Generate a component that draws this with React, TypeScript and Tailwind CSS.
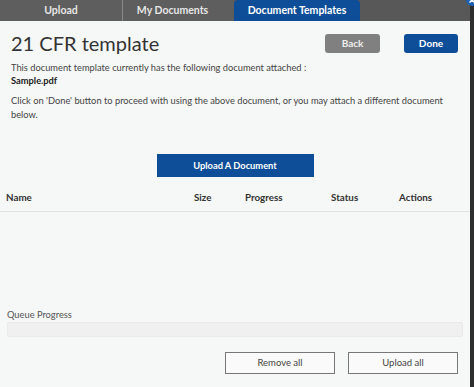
import React from "react";

const font = { fontFamily: "Lato, 'Open Sans', sans-serif" };

function Tabs() {
  return (
    <div className="flex h-[21px] items-end bg-[#585858] text-[10.5px] font-bold">
      <div className="flex h-full w-[123px] items-center justify-center border-r border-[#8a8a8a] bg-[#5e5e5e] text-[#e6e6e6]">
        Upload
      </div>
      <div className="flex h-full w-[111px] items-center justify-center bg-[#5e5e5e] pr-[12px] text-[#e6e6e6]">
        My Documents
      </div>
      <div className="flex h-full w-[126px] items-center justify-center rounded-t-[4px] bg-[#0e4e99] text-white">
        Document Templates
      </div>
      <div className="flex-1" />
    </div>
  );
}

export default function App() {
  return (
    <div className="relative flex h-[387px] w-[474px] overflow-hidden bg-[#2e2e2e]" style={font}>
      <div className="flex w-[470px] flex-col bg-[#f6f7f7]">
        <Tabs />

        <div className="flex items-center justify-between pl-[11px] pr-[12px] pt-[8px]">
          <h1 className="text-[20px] leading-[28px] text-[#333]">21 CFR template</h1>
          <div className="flex gap-[24px] text-[10px] font-bold">
            <button className="h-[19px] w-[55px] rounded-[3px] bg-[#808080] text-[#eee]">Back</button>
            <button className="h-[19px] w-[54px] rounded-[3px] bg-[#0e4e99] text-white">Done</button>
          </div>
        </div>

        <div className="px-[11px] pt-[4px] text-[9.3px] leading-[13px] text-[#444]">
          <p>This document template currently has the following document attached :</p>
          <p className="font-bold text-[#222]">Sample.pdf</p>
          <p className="mt-[7px] leading-[14px]">
            Click on 'Done' button to proceed with using the above document, or you may attach a different document below.
          </p>
        </div>

        <div className="flex justify-center pt-[32px]">
          <button className="h-[23px] w-[157px] bg-[#0e4e99] text-[9.3px] font-bold text-white">
            Upload A Document
          </button>
        </div>

        <div className="mt-[14px] grid grid-cols-[188px_51px_86px_68px_1fr] border-b border-[#e2e2e2] pb-[7px] pl-[6px] text-[9.8px] font-bold leading-[13px] text-[#333]">
          <span>Name</span>
          <span>Size</span>
          <span>Progress</span>
          <span>Status</span>
          <span>Actions</span>
        </div>

        <div className="flex-1" />

        <div className="px-[7px]">
          <p className="text-[9.3px] leading-[12px] text-[#555]">Queue Progress</p>
          <div className="mt-[1px] h-[15px] rounded-[2px] border border-[#eaeaea] bg-[#f0f0f0]" />
        </div>

        <div className="flex justify-end gap-[13px] pb-[13px] pr-[12px] pt-[15px] text-[9.5px] text-[#444]">
          <button className="h-[22px] w-[110px] border border-[#777] bg-[#fafafa]">Remove all</button>
          <button className="h-[22px] w-[110px] border border-[#777] bg-[#fafafa]">Upload all</button>
        </div>
      </div>
      <svg className="absolute right-[-4px] top-[-6px] h-[12px] w-[12px]" viewBox="0 0 12 12">
        <circle cx="6" cy="6" r="6" fill="#1d5fb0" />
        <path d="M3.5 3.5 8.5 8.5 M8.5 3.5 3.5 8.5" stroke="#fff" strokeWidth="1.6" />
      </svg>
    </div>
  );
}
